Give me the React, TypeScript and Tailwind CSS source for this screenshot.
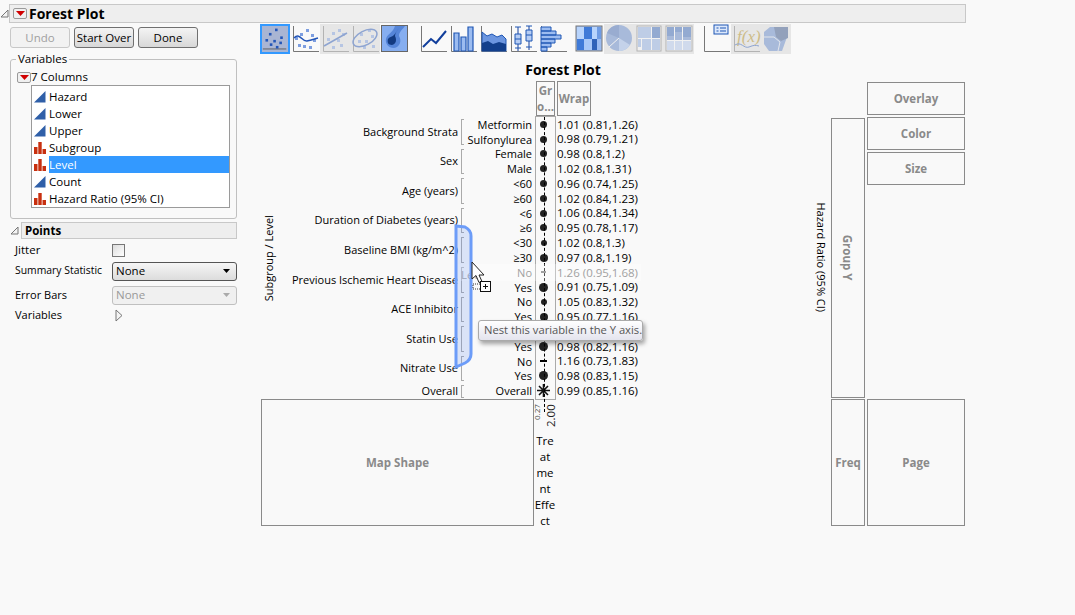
import type { ReactNode } from "react";

type Row = { level: string; value: string; dot: string; faded?: boolean; mark?: "tick" | "dash" | "star" };
type Group = { name: string; rows: Row[] };

const groups: Group[] = [
  { name: "Background Strata", rows: [
    { level: "Metformin", value: "1.01 (0.81,1.26)", dot: "size-[7px]" },
    { level: "Sulfonylurea", value: "0.98 (0.79,1.21)", dot: "size-[7px]" },
  ] },
  { name: "Sex", rows: [
    { level: "Female", value: "0.98 (0.8,1.2)", dot: "size-[7px]" },
    { level: "Male", value: "1.02 (0.8,1.31)", dot: "size-[7px]" },
  ] },
  { name: "Age (years)", rows: [
    { level: "<60", value: "0.96 (0.74,1.25)", dot: "size-[7px]" },
    { level: "≥60", value: "1.02 (0.84,1.23)", dot: "size-[7px]" },
  ] },
  { name: "Duration of Diabetes (years)", rows: [
    { level: "<6", value: "1.06 (0.84,1.34)", dot: "size-[7px]" },
    { level: "≥6", value: "0.95 (0.78,1.17)", dot: "size-[7px]" },
  ] },
  { name: "Baseline BMI (kg/m^2)", rows: [
    { level: "<30", value: "1.02 (0.8,1.3)", dot: "size-[6px]" },
    { level: "≥30", value: "0.97 (0.8,1.19)", dot: "size-[8px]" },
  ] },
  { name: "Previous Ischemic Heart Disease", rows: [
    { level: "No", value: "1.26 (0.95,1.68)", dot: "", faded: true, mark: "tick" },
    { level: "Yes", value: "0.91 (0.75,1.09)", dot: "size-[9px]" },
  ] },
  { name: "ACE Inhibitor", rows: [
    { level: "No", value: "1.05 (0.83,1.32)", dot: "size-[6px]" },
    { level: "Yes", value: "0.95 (0.77,1.16)", dot: "size-[8px]" },
  ] },
  { name: "Statin Use", rows: [
    // this row is hidden behind the tooltip
    { level: "", value: "", dot: "size-[6px]" },
    { level: "Yes", value: "0.98 (0.82,1.16)", dot: "size-[9px]" },
  ] },
  { name: "Nitrate Use", rows: [
    { level: "No", value: "1.16 (0.73,1.83)", dot: "", mark: "dash" },
    { level: "Yes", value: "0.98 (0.83,1.15)", dot: "size-[9px]" },
  ] },
  { name: "Overall", rows: [
    { level: "Overall", value: "0.99 (0.85,1.16)", dot: "", mark: "star" },
  ] },
];

const columns = [
  { name: "Hazard", kind: "cont" },
  { name: "Lower", kind: "cont" },
  { name: "Upper", kind: "cont" },
  { name: "Subgroup", kind: "nom" },
  { name: "Level", kind: "nom", selected: true },
  { name: "Count", kind: "cont" },
  { name: "Hazard Ratio (95% CI)", kind: "nom" },
];

function RedMenu() {
  return (
    <span className="flex h-[11px] w-[14px] items-center justify-center rounded-[2px] border border-[#9a9a9a] bg-[#f0f0f0]">
      <svg width="9" height="5" viewBox="0 0 9 5"><path d="M0 0h9L4.5 5z" fill="#d00000" /></svg>
    </span>
  );
}

function Disclosure() {
  return (
    <svg width="9" height="9" viewBox="0 0 9 9" className="shrink-0">
      <path d="M8 1v7H1z" fill="#f4f4f4" stroke="#777" />
    </svg>
  );
}

function ColumnIcon({ kind }: { kind: string }) {
  if (kind === "cont") {
    return <svg width="12" height="12" viewBox="0 0 12 12"><path d="M0 11.5 11.5 0v11.5z" fill="#2f5fa8" /></svg>;
  }
  return (
    <svg width="12" height="12" viewBox="0 0 12 12">
      <path d="M0 5h3.5v7H0zM4.3 0h3.4v12H4.3zM8.5 7H12v5H8.5z" fill="#c8300f" />
    </svg>
  );
}

function Btn({ children, disabled }: { children: ReactNode; disabled?: boolean }) {
  return (
    <button
      className={
        disabled
          ? "h-[21px] w-[60px] rounded-[3px] border border-[#c8c8c8] bg-[#f2f2f2] text-[#a0a0a0]"
          : "h-[21px] w-[60px] rounded-[3px] border border-[#707070] bg-gradient-to-b from-[#f4f4f4] to-[#d8d8d8] text-black"
      }
    >
      {children}
    </button>
  );
}

function Zone({ className, children }: { className: string; children: ReactNode }) {
  return (
    <div className={"flex items-center justify-center border border-[#8a8a8a] font-bold text-[#8a8a8a] " + className}>
      {children}
    </div>
  );
}

function ToolIcon({ children, state }: { children: ReactNode; state?: "on" | "off" }) {
  const cls =
    state === "on"
      ? "size-[30px] border-2 border-[#3399ff] bg-[#a9b5d3]"
      : state === "off"
        ? "size-[30px] bg-[#e6e6e6]"
        : "size-[30px]";
  return (
    <div className={cls}>
      <svg width="100%" height="100%" viewBox="0 0 30 30" opacity={state === "off" ? 0.45 : 1}>{children}</svg>
    </div>
  );
}

const axis = <path d="M3.5 2v25.5H29" fill="none" stroke="#777" />;
const pts = (list: number[][], fill = "#7d9ee0") =>
  list.map(([x, y], i) => <rect key={i} x={x} y={y} width="3" height="3" fill={fill} />);

function Toolbar() {
  return (
    <div className="flex h-[30px] pl-[10px]">
      <ToolIcon state="on">
        <path d="M1 26.5h27" stroke="#555" />
        {pts([[15, 3], [8, 8], [21, 12], [4, 15], [13, 16], [20, 18], [9, 20], [16, 23]], "#2456b8")}
      </ToolIcon>
      <ToolIcon>
        {axis}
        {pts([[16, 5], [10, 9], [21, 10], [5, 13], [23, 15], [8, 20], [13, 21], [19, 22]])}
        <path d="M4 14c6-6 8 4 13 3s7-2 11-3" fill="none" stroke="#2456b8" strokeWidth="1.5" />
      </ToolIcon>
      <ToolIcon state="off">
        {axis}
        {pts([[18, 5], [12, 8], [22, 9], [7, 14], [17, 15], [12, 22], [20, 20]])}
        <path d="M4 22 27 9" stroke="#2456b8" strokeWidth="1.5" />
      </ToolIcon>
      <ToolIcon state="off">
        {axis}
        {pts([[18, 5], [10, 9], [21, 11], [8, 16], [15, 16], [13, 22], [22, 21]])}
        <ellipse cx="15" cy="14" rx="13" ry="7" transform="rotate(-28 15 14)" fill="none" stroke="#2456b8" strokeWidth="1.5" />
      </ToolIcon>
      <ToolIcon>
        <rect x="1.5" y="1.5" width="26" height="26" fill="#86aef0" stroke="#666" />
        <path d="M15 2h10c-3 4-6 6-6 10 3 5 1 11-5 12-6 0-9-5-8-9 1-5 7-6 9-13z" fill="#5585d8" />
        <path d="M19 4c-2 3-4 5-4 8 2 4 1 8-3 9-4 0-5-3-4-6 1-2 4-2 6-4 2-2 3-5 5-7z" fill="#123a80" />
      </ToolIcon>

      <div className="ml-[8px]">
        <ToolIcon>
          {axis}
          <path d="M5 23 13 15l5 4L28 7" fill="none" stroke="#123f9c" strokeWidth="2" />
        </ToolIcon>
      </div>
      <ToolIcon>
        {axis}
        <path d="M6 9h5v18H6zM13 13h5v14h-5zM20 3h5v24h-5z" fill="#9cbcf0" stroke="#1f56b4" strokeWidth="1.2" />
      </ToolIcon>
      <ToolIcon>
        {axis}
        <path d="M4 8l5 4 5-2 5 3 5-2 4 4v12H4z" fill="#6c96e0" stroke="#1f56b4" />
        <path d="M4 19l6-2 5 3 6-2 7 2v7H4z" fill="#123f8c" />
      </ToolIcon>
      <ToolIcon>
        {axis}
        <path d="M10 3v24M21 2v24" stroke="#123f9c" />
        <path d="M7 10h6v10H7zM18 6h6v11h-6z" fill="#b6cdf4" stroke="#1f56b4" />
        <path d="M7 15h6M18 11h6M7 3h6M18 2h6M7 24h6M18 23h6" stroke="#1f56b4" />
      </ToolIcon>
      <ToolIcon>
        {axis}
        <path d="M3 3h10v4H3zM3 7h15v4H3zM3 11h20v4H3zM3 15h14v4H3zM3 19h10v4H3zM3 23h6v4H3z" fill="#9cbcf0" stroke="#1f56b4" />
      </ToolIcon>

      <div className="ml-[6px]">
        <ToolIcon>
          <rect x="2" y="2" width="26" height="25" fill="#9cbcf0" stroke="#777" />
          <path d="M3 3h7v12H3zM18 3h5v12h-5z" fill="#b8d4fc" />
          <path d="M10 3h8v12h-8z" fill="#3f7ad8" />
          <path d="M23 3h4v12h-4z" fill="#6f9ce4" />
          <path d="M3 15h7v11H3zM18 15h5v11h-5z" fill="#3f7ad8" />
          <path d="M10 15h8v11h-8z" fill="#a8c8f8" />
          <path d="M18 15h5v11h-5z" fill="#2f62b8" />
        </ToolIcon>
      </div>
      <ToolIcon state="off">
        <circle cx="15" cy="14" r="13" fill="#5f86cc" />
        <path d="M15 14 5 23" stroke="#fff" />
        <path d="M15 14 26 21A13 13 0 0 1 15 27z" fill="#9cbcf0" />
        <path d="M15 14V1A13 13 0 0 0 3 9z" fill="#3e68b6" />
      </ToolIcon>
      <ToolIcon state="off">
        <rect x="3" y="2" width="24" height="25" fill="#fff" stroke="#777" />
        <path d="M4 3h13v11H4zM8 15h9v11H8zM18 15h8v11h-8z" fill="#8fb0e8" />
        <path d="M18 3h8v11h-8z" fill="#2f62b8" />
        <path d="M4 15h3v8H4z" fill="#8fb0e8" />
      </ToolIcon>
      <ToolIcon state="off">
        <rect x="2" y="2" width="26" height="25" fill="#fff" stroke="#777" />
        <path d="M3 3h7v9H3zM11 3h7v5h-7zM19 3h8v10h-8z" fill="#2f62b8" />
        <path d="M3 12h7v4H3zM11 8h7v8h-7zM19 13h8v3h-8z" fill="#5f86cc" />
        <path d="M3 17h7v9H3zM11 17h7v9h-7zM19 17h8v9h-8z" fill="#b6cdf4" />
      </ToolIcon>

      <div className="ml-[7px]">
        <ToolIcon>
          {axis}
          <rect x="13" y="1" width="14" height="9" fill="#dce8fb" stroke="#1f56b4" />
          <path d="M15.5 4h2M15.5 7h2M19 4h6M19 7h6" stroke="#1f56b4" />
        </ToolIcon>
      </div>
      <ToolIcon state="off">
        {axis}
        <text x="6" y="18" fontSize="17" fontStyle="italic" fontFamily="Liberation Serif, serif" fill="#b08a10">f(x)</text>
        <path d="M4 21c6-4 9 4 14 2s6-2 10-1" fill="none" stroke="#2456b8" />
      </ToolIcon>
      <ToolIcon state="off">
        <path d="M3 8 9 3h17v10l-5 14H8L3 20z" fill="#5f86cc" />
        <path d="M13 3h14v11l-7 3-5-4z" fill="#2f4f88" />
        <path d="M3 13h10l6 5-2 9" fill="none" stroke="#dfe6f4" />
      </ToolIcon>
    </div>
  );
}

function Marker({ row }: { row: Row }) {
  if (row.mark === "tick") return <span className="h-[2px] w-[5px] bg-[#777]" />;
  if (row.mark === "dash") return <span className="h-[2px] w-[7px] bg-black" />;
  if (row.mark === "star") {
    return (
      <svg width="13" height="13" viewBox="0 0 13 13">
        <path d="M6.5 0v13M0 6.5h13M2 2l9 9M11 2l-9 9" stroke="#111" strokeWidth="1.6" />
      </svg>
    );
  }
  return <span className={"rounded-full bg-[#222] " + row.dot} />;
}

function Forest() {
  return (
    <div className="relative">
      {groups.map((g) => (
        <div key={g.name} className="flex">
          <div className="flex w-[197px] items-center justify-end whitespace-nowrap text-[11px]">{g.name}</div>
          <div className="my-[2px] ml-[3px] w-[3px] border-y border-l border-[#aaa]" />
          <div>
            {g.rows.map((r, i) => (
              <div key={i} className="flex h-[14.8px] items-center leading-none">
                <div className={"w-[68px] whitespace-nowrap text-right text-[11px] " + (r.faded ? "text-[#777]" : "")}>{r.level}</div>
                <div className="flex w-[25px] items-center justify-center pr-[2px]"><Marker row={r} /></div>
                <div className={"whitespace-nowrap " + (r.faded ? "text-[#777]" : "")}>{r.value}</div>
              </div>
            ))}
          </div>
        </div>
      ))}
      {/* frame and reference line sit over the rows */}
      <div className="pointer-events-none absolute bottom-0 left-[274px] top-[-1px] w-[21px] border border-[#aaa]">
        <div className="absolute bottom-[-13px] left-[8px] top-0 w-0 border-l border-dashed border-black" />
      </div>
    </div>
  );
}

function DropOverlay() {
  return (
    <>
      <div className="absolute left-[194px] top-[204px] h-[17px] w-[186px] bg-white/30" />
      <span className="absolute left-[200px] top-[206px] text-[#aaa]">Lev</span>
      <svg className="absolute left-[192px] top-[164px]" width="22" height="146" viewBox="0 0 22 146">
        <path d="M3 2 L12 3 Q18 6 18 12 V130 Q18 136 12 139 L3 143 Z" fill="#5f8cf0" fillOpacity="0.2" stroke="#6c9cf8" strokeWidth="3" />
      </svg>
      <svg className="absolute left-[208px] top-[201px]" width="24" height="32" viewBox="0 0 24 32">
        <path d="M3 1v17l4-3.5 3 7 3-1-3-6.5h5z" fill="#fff" stroke="#222" />
        <path d="M4 23h8v5H4z" fill="none" stroke="#333" strokeDasharray="1 1" />
        <rect x="11.5" y="20.5" width="10" height="10" fill="#fff" stroke="#111" />
        <path d="M16.5 23v5M14 25.5h5" stroke="#111" />
      </svg>
      <div className="absolute left-[217px] top-[260px] flex h-[21px] w-[165px] items-center rounded-[3px] border border-[#aaa] bg-gradient-to-b from-white to-[#e4e4ee] pl-[5px] text-[11.2px] whitespace-nowrap text-[#555] shadow-[2px_3px_4px_rgba(0,0,0,0.35)]">
        Nest this variable in the Y axis.
      </div>
    </>
  );
}

export default function App() {
  return (
    <div className="h-[615px] w-[1075px] overflow-hidden bg-[#f9f9f9] font-['Open_Sans',sans-serif] text-[11.5px] text-black">
      <div className="flex items-center pt-[4px]">
        <Disclosure />
        <div className="flex h-[19px] w-[957px] items-center gap-[2px] border border-[#c8c8c8] bg-[#eeeeee] pl-[3px]">
          <RedMenu />
          <span className="text-[14px] font-bold">Forest Plot</span>
        </div>
      </div>

      <div className="flex">
        {/* launch panel */}
        <div className="w-[250px] pl-[10px]">
          <div className="mt-[4px] flex gap-[4px]">
            <Btn disabled>Undo</Btn>
            <Btn>Start Over</Btn>
            <Btn>Done</Btn>
          </div>

          <div className="relative mt-[11px] h-[160px] w-[227px] rounded-[3px] border border-[#c0c0c0] pl-[6px]">
            <span className="absolute left-[5px] top-[-9px] bg-[#f9f9f9] px-[2px] leading-[16px]">Variables</span>
            <div className="flex h-[23px] items-end leading-[14px]">
              <RedMenu />
              <span className="-mb-[1px]">7 Columns</span>
            </div>
            <div className="ml-[14px] mt-[2px] h-[123px] w-[199px] border border-[#9a9a9a] bg-white pl-[2px] pt-[2px]">
              {columns.map((c) => (
                <div key={c.name} className="flex h-[17px] items-center">
                  <div className="flex w-[15px] shrink-0 items-center"><ColumnIcon kind={c.kind} /></div>
                  <div className={c.selected ? "flex h-full w-[180px] items-center bg-[#3399ff] text-white" : ""}>{c.name}</div>
                </div>
              ))}
            </div>
          </div>

          <div className="mt-[3px] flex items-center gap-[2px]">
            <Disclosure />
            <div className="flex h-[17px] w-[216px] items-center border border-[#c8c8c8] bg-[#eeeeee] pl-[3px] font-bold">Points</div>
          </div>
          <div className="mt-[4px] flex h-[14px] items-center pl-[5px]">
            <span className="w-[97px]">Jitter</span>
            <span className="size-[13px] border border-[#777] bg-gradient-to-br from-[#ddd] to-white" />
          </div>
          <div className="mt-[4px] flex h-[20px] items-center pl-[5px]">
            <span className="w-[97px] whitespace-nowrap text-[10.4px]">Summary Statistic</span>
            <div className="flex h-[19px] w-[125px] items-center justify-between rounded-[3px] border border-[#555] bg-gradient-to-b from-[#f6f6f6] to-[#dcdcdc] px-[3px] pr-[6px]">
              None
              <svg width="7" height="4" viewBox="0 0 7 4"><path d="M0 0h7L3.5 4z" fill="#000" /></svg>
            </div>
          </div>
          <div className="mt-[4px] flex h-[20px] items-center pl-[5px]">
            <span className="w-[97px] text-[11px]">Error Bars</span>
            <div className="flex h-[19px] w-[125px] items-center justify-between rounded-[3px] border border-[#c0c0c0] bg-[#f0f0f0] px-[3px] pr-[6px] text-[#999]">
              None
              <svg width="7" height="4" viewBox="0 0 7 4"><path d="M0 0h7L3.5 4z" fill="#aaa" /></svg>
            </div>
          </div>
          <div className="mt-[3px] flex h-[14px] items-center pl-[5px]">
            <span className="w-[100px] text-[11px]">Variables</span>
            <svg width="9" height="13" viewBox="0 0 9 13"><path d="M1 1l6 5.5L1 12z" fill="#f4f4f4" stroke="#777" /></svg>
          </div>
        </div>

        {/* graph builder */}
        <div className="pt-[1px]">
          <Toolbar />
          <div className="flex pl-[11px] pt-[6px]">
            <div className="relative w-[389px]">
              <div className="pl-[202px] text-center text-[14px] leading-[20px] font-bold">
                <span className="block w-[200px] whitespace-nowrap">Forest Plot</span>
              </div>
              <div className="mt-[1px] flex h-[35px] gap-[2px] pl-[275px] leading-[16px]">
                <Zone className="w-[19px] text-center">Gr<br />o...</Zone>
                <Zone className="w-[34px]">Wrap</Zone>
              </div>
              <div className="mt-[1px]"><Forest /></div>
              <div className="-mt-[1px] flex">
                <Zone className="h-[127px] w-[273px]">Map Shape</Zone>
                <div className="relative w-[40px]">
                  <span className="absolute left-[-3px] top-[3px] origin-top-left translate-y-[18px] -rotate-90 whitespace-nowrap text-[8px] text-[#444]">0.27</span>
                  <span className="absolute left-[8px] top-[1px] origin-top-left translate-y-[27px] -rotate-90 whitespace-nowrap text-[#222]">2.00</span>
                  <div className="mt-[34px] w-[22px] text-center leading-[16px]">Tre<br />at<br />me<br />nt<br />Effe<br />ct</div>
                </div>
              </div>
              <div className="absolute left-[0px] top-[153px] flex h-[90px] w-[16px] items-center justify-center">
                <span className="-rotate-90 whitespace-nowrap text-[11px]">Subgroup / Level</span>
              </div>
              <DropOverlay />
            </div>

            <div className="ml-[161px] flex w-[20px] items-center justify-center pb-[74px]">
              <span className="rotate-90 whitespace-nowrap text-[11px]">Hazard Ratio (95% CI)</span>
            </div>

            <div className="flex flex-col pt-[22px]">
              <div className="flex h-[317px] gap-[2px]">
                <Zone className="mt-[36px] h-[280px] w-[34px]"><span className="rotate-90 whitespace-nowrap">Group Y</span></Zone>
                <div className="flex flex-col gap-[2px]">
                  <Zone className="h-[33px] w-[98px]">Overlay</Zone>
                  <Zone className="h-[33px] w-[98px]">Color</Zone>
                  <Zone className="h-[33px] w-[98px]">Size</Zone>
                </div>
              </div>
              <div className="flex gap-[2px]">
                <Zone className="h-[127px] w-[34px]">Freq</Zone>
                <Zone className="h-[127px] w-[98px]">Page</Zone>
              </div>
            </div>
          </div>
        </div>
      </div>
    </div>
  );
}
